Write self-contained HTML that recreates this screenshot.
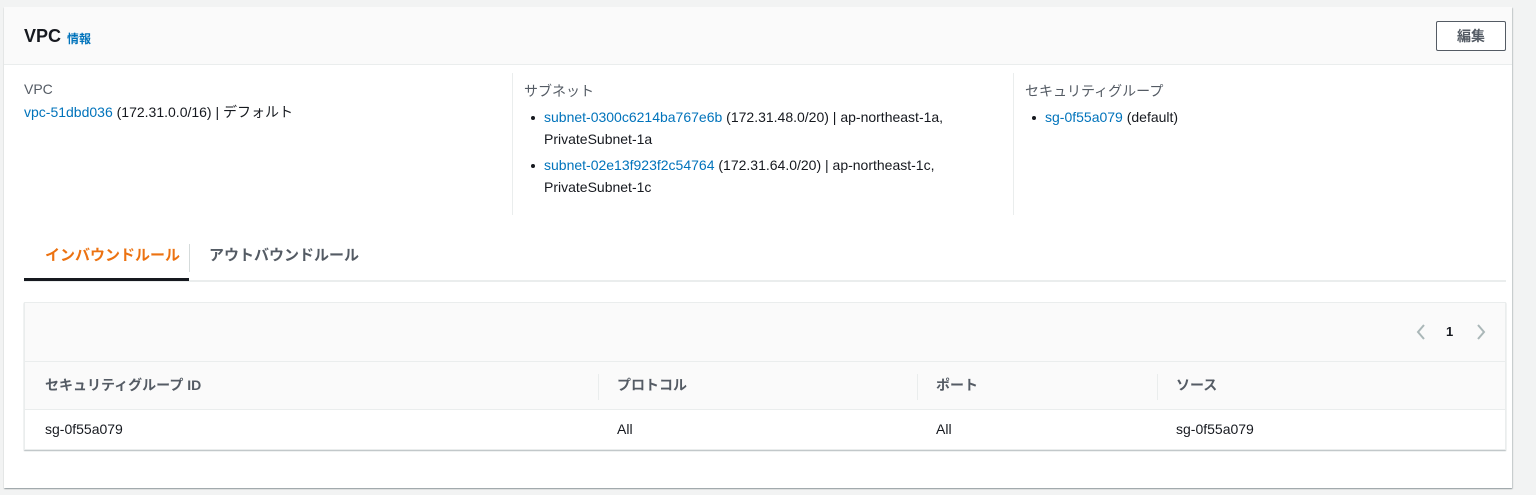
<!DOCTYPE html>
<html><head><meta charset="utf-8"><style>
*{box-sizing:border-box;margin:0;padding:0}
body{width:1536px;height:495px;background:#f2f3f3;font-family:"Liberation Sans","Noto Sans CJK JP",sans-serif;font-size:14px;color:#16191f;position:relative;overflow:hidden}
.card{position:absolute;left:4px;top:7px;width:1508px;height:481px;background:#fff;box-shadow:0 1px 1px rgba(0,28,36,.3),1px 1px 1px rgba(0,28,36,.15);}
.hdr{height:58px;background:#fafafa;border-bottom:1px solid #eaeded;position:relative}
.hdr h2{position:absolute;left:20px;top:19px;font-size:18px;font-weight:bold}
.hdr .info{position:absolute;left:63px;top:23px;font-size:12px;color:#0073bb;font-weight:bold}
.btn{position:absolute;left:1432px;top:14px;width:70px;height:30px;border:1px solid #545b64;border-radius:2px;background:#fff;font-size:14px;font-weight:bold;color:#545b64;text-align:center;line-height:28px}
.col{position:absolute;top:66px;height:142px}
.lbl{color:#545b64;font-size:14px}
a{color:#0073bb;text-decoration:none}
ul{list-style:none}
li{position:relative;padding-left:20px;line-height:22px;font-size:14px}
li:before{content:"";position:absolute;left:7px;top:10px;width:4px;height:4px;border-radius:50%;background:#16191f}
.tabs{position:absolute;left:20px;top:225px;width:1482px;height:50px;border-bottom:2px solid #eaeded}
.tab{position:absolute;top:12px;font-size:15px;font-weight:bold;color:#545b64}
.t1{left:21px;color:#ec7211}
.ul{position:absolute;left:0;top:46px;width:165px;height:3px;background:#16191f}
.sep{position:absolute;left:165px;top:12px;width:1px;height:28px;background:#d5dbdb}
.tbl{position:absolute;left:20px;top:295px;width:1482px;height:148px;border:1px solid #eaeded;box-shadow:0 1px 1px rgba(0,28,36,.3)}
.th{position:absolute;top:58px;left:0;right:0;height:49px;background:#fafafa;border-top:1px solid #eaeded;border-bottom:1px solid #eaeded}
.top{position:absolute;top:0;left:0;right:0;height:58px;background:#fafafa}
.c{position:absolute;font-size:14px}
.h{font-weight:bold;color:#545b64;top:13px}
.vs{position:absolute;top:12px;width:1px;height:26px;background:#eaeded}
.r{top:118px}
</style></head><body>
<div class="card">
<div class="hdr"><h2>VPC</h2><span class="info">情報</span><div class="btn">編集</div></div>
<div class="col" style="left:20px;width:489px;border-right:1px solid #eaeded">
<div class="lbl" style="margin-top:8px">VPC</div>
<div style="margin-top:5px"><a>vpc-51dbd036</a> (172.31.0.0/16) | デフォルト</div></div>
<div class="col" style="left:520px;width:490px;border-right:1px solid #eaeded">
<div class="lbl" style="margin-top:8px">サブネット</div>
<ul style="margin-top:5px"><li><a>subnet-0300c6214ba767e6b</a> (172.31.48.0/20) | ap-northeast-1a,<br>PrivateSubnet-1a</li>
<li style="margin-top:4px"><a>subnet-02e13f923f2c54764</a> (172.31.64.0/20) | ap-northeast-1c,<br>PrivateSubnet-1c</li></ul></div>
<div class="col" style="left:1021px;width:480px">
<div class="lbl" style="margin-top:8px">セキュリティグループ</div>
<ul style="margin-top:5px"><li><a>sg-0f55a079</a> (default)</li></ul></div>
<div class="tabs"><span class="tab t1">インバウンドルール</span><div class="sep"></div><span class="tab" style="left:185px">アウトバウンドルール</span><div class="ul"></div></div>
<div class="tbl">
<div class="top"><svg style="position:absolute;left:1390px;top:21px" width="12" height="16"><path d="M9 1L3 8l6 7" stroke="#aab7b8" stroke-width="2" fill="none"/></svg>
<span class="c" style="left:1421px;top:21px;font-weight:bold;font-size:13px">1</span>
<svg style="position:absolute;left:1450px;top:21px" width="12" height="16"><path d="M3 1l6 7-6 7" stroke="#aab7b8" stroke-width="2" fill="none"/></svg></div>
<div class="th"><span class="c h" style="left:20px">セキュリティグループ ID</span><div class="vs" style="left:573px"></div>
<span class="c h" style="left:592px">プロトコル</span><div class="vs" style="left:892px"></div>
<span class="c h" style="left:911px">ポート</span><div class="vs" style="left:1132px"></div>
<span class="c h" style="left:1151px">ソース</span></div>
<span class="c r" style="left:20px">sg-0f55a079</span><span class="c r" style="left:592px">All</span><span class="c r" style="left:911px">All</span><span class="c r" style="left:1151px">sg-0f55a079</span>
</div></div>
</body></html>
